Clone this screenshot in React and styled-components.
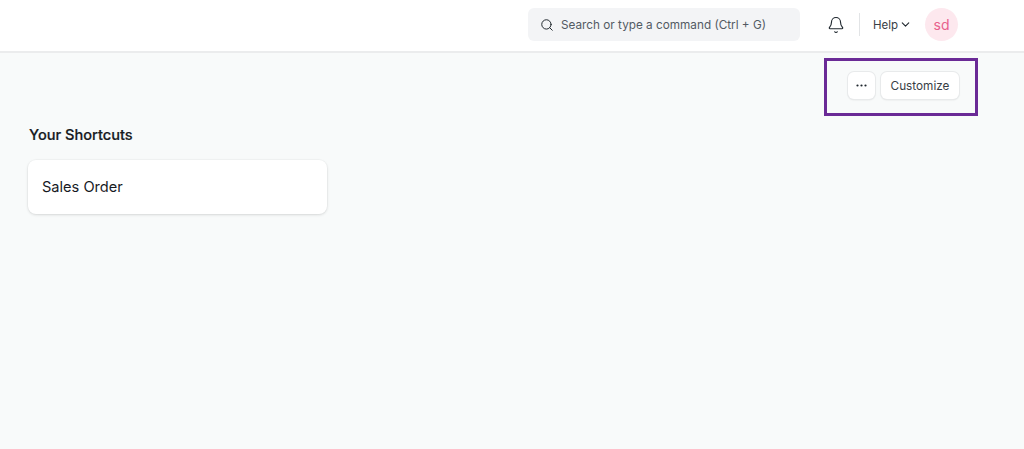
import React from 'react'
import styled, { createGlobalStyle } from 'styled-components'
import { Search, Bell, ChevronDown } from 'lucide-react'

const GlobalStyle = createGlobalStyle`
  html, body {
    margin: 0;
    height: 100%;
    background: #f8fafa;
    font-family: Inter, "Noto Sans", sans-serif;
    overflow: hidden;
  }
`

const Page = styled.div`
  position: relative;
  width: 1024px;
  height: 449px;
  overflow: hidden;
`

const Navbar = styled.header`
  height: 53px;
  box-sizing: border-box;
  background: #fff;
  border-bottom: 2px solid #ebeced;
  display: flex;
  align-items: flex-start;
  padding: 8px 66px 0 528px;
`

const SearchBox = styled.div`
  flex: none;
  width: 272px;
  height: 33px;
  box-sizing: border-box;
  background: #f3f4f6;
  border-radius: 6px;
  display: flex;
  align-items: center;
  gap: 7px;
  padding-left: 12px;
  font-size: 11.75px;
  white-space: nowrap;
  color: #525a63;
  svg {
    color: #1f272e;
  }
`

const BellButton = styled.div`
  flex: none;
  margin-left: 27px;
  height: 33px;
  display: flex;
  align-items: center;
  color: #1f272e;
`

const Divider = styled.div`
  flex: none;
  width: 1px;
  height: 23px;
  margin: 5px 13px 0 14px;
  background: #e2e4e6;
`

const HelpMenu = styled.div`
  flex: none;
  height: 33px;
  display: flex;
  align-items: center;
  gap: 1px;
  font-size: 11.5px;
  color: #383e45;
  svg {
    color: #1f272e;
  }
`

const Avatar = styled.div`
  flex: none;
  width: 33px;
  height: 33px;
  margin-left: 13px;
  border-radius: 50%;
  background: #fde8ee;
  color: #e8618c;
  display: flex;
  align-items: center;
  justify-content: center;
  font-size: 14px;
`

const Actions = styled.div`
  display: flex;
  justify-content: flex-end;
  gap: 6px;
  padding: 19px 65px 0 0;
`

const ActionButton = styled.button`
  width: ${(p) => p.$width}px;
  height: 27px;
  padding: 0;
  box-sizing: border-box;
  background: #fff;
  border: none;
  border-radius: 6px;
  box-shadow: 0 0 0 1px #e8eaeb, 0 1px 2px rgba(0, 0, 0, 0.12);
  font-family: inherit;
  font-size: 11.75px;
  color: #383e45;
  display: flex;
  align-items: center;
  justify-content: center;
`

const Dots = styled.svg`
  width: 11px;
  height: 3px;
`

const Section = styled.section`
  padding: 26px 0 0 28px;
`

const SectionTitle = styled.h2`
  margin: 0 0 15px 1px;
  font-size: 14.6px;
  line-height: 20px;
  font-weight: 500;
  color: #171a1f;
  -webkit-text-stroke: 0.2px #171a1f;
`

const ShortcutCard = styled.div`
  width: 299px;
  height: 54px;
  box-sizing: border-box;
  background: #fff;
  border-radius: 8px;
  box-shadow: 0 0 0 1px rgba(0, 0, 0, 0.02), 0 1px 3px rgba(0, 0, 0, 0.12);
  display: flex;
  align-items: center;
  padding-left: 14px;
  font-size: 14.6px;
  color: #171a1f;
`

const Highlight = styled.div`
  position: absolute;
  left: 824px;
  top: 58px;
  width: 154px;
  height: 58px;
  box-sizing: border-box;
  border: 3px solid #6a2a96;
  pointer-events: none;
`

export default function App() {
  return (
    <Page>
      <GlobalStyle />
      <Navbar>
        <SearchBox>
          <Search size={14} strokeWidth={1.7} />
          <span>Search or type a command (Ctrl + G)</span>
        </SearchBox>
        <BellButton>
          <Bell size={18} strokeWidth={1.5} />
        </BellButton>
        <Divider />
        <HelpMenu>
          Help
          <ChevronDown size={13} strokeWidth={2} />
        </HelpMenu>
        <Avatar>sd</Avatar>
      </Navbar>
      <Actions>
        <ActionButton $width={27}>
          <Dots viewBox="0 0 11 3">
            <circle cx="1.5" cy="1.5" r="1.1" fill="#1f272e" />
            <circle cx="5.5" cy="1.5" r="1.1" fill="#1f272e" />
            <circle cx="9.5" cy="1.5" r="1.1" fill="#1f272e" />
          </Dots>
        </ActionButton>
        <ActionButton $width={78}>Customize</ActionButton>
      </Actions>
      <Section>
        <SectionTitle>Your Shortcuts</SectionTitle>
        <ShortcutCard>Sales Order</ShortcutCard>
      </Section>
      <Highlight />
    </Page>
  )
}
